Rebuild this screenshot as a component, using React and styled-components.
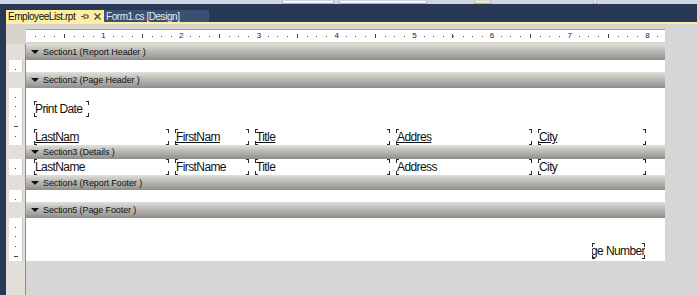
import styled, { createGlobalStyle } from 'styled-components';

const GlobalStyle = createGlobalStyle`
  html, body { margin: 0; padding: 0; }
  body { background: #293955; font-family: "Liberation Sans", Arial, sans-serif; }
`

const INCH = 77.72;
const EIGHTH = INCH / 8;

const Frame = styled.div`
  width: 697px;
  height: 295px;
  overflow: hidden;
  background: #293955;
  display: flex;
  flex-direction: column;
`

const TopStrip = styled.div`
  height: 4px;
  background: #cfd6e5;
  display: flex;
  align-items: flex-end;
`

const StripBox = styled.div`
  height: 3px;
  width: ${p => p.$w}px;
  margin-left: ${p => p.$ml}px;
  background: ${p => p.$bg || '#f4f6fa'};
  border: 1px solid #a9b4c8;
  border-top: none;
  box-sizing: border-box;
`

const TabRow = styled.div`
  height: 12px;
  margin-top: 6px;
  padding-left: 6px;
  display: flex;
`

const Tab = styled.div`
  height: 12px;
  width: ${p => p.$w}px;
  box-sizing: border-box;
  padding-left: 2px;
  display: flex;
  align-items: center;
  gap: 4px;
  background: ${p => (p.$active ? '#fdeea2' : '#3a5174')};
  color: ${p => (p.$active ? '#111' : '#e4e9f1')};
  font-size: 10px;
  letter-spacing: -0.45px;
  white-space: nowrap;
`

const TabLabel = styled.span`
  flex: 1;
`

const TabIcons = styled.span`
  display: flex;
  align-items: center;
  gap: 4px;
  margin-right: 3px;
`

const Document = styled.div`
  flex: 1;
  margin-left: 6px;
  border-top: 2px solid #fdeea2;
  background: #d6d6d6;
  display: flex;
  flex-direction: column;
`

const Row = styled.div`
  display: flex;
  height: ${p => p.$h}px;
  flex-shrink: 0;
`

const Gutter = styled.div`
  width: 20px;
  flex-shrink: 0;
  box-sizing: border-box;
  background: #e1dfd8;
  border-right: 1px solid #8c8c8c;
  display: flex;
`

const VRuler = styled.div`
  width: 13px;
  margin-left: 3px;
  background:
    linear-gradient(#444, #444) center ${INCH / 2 - 1}px / 4px 1px no-repeat,
    repeating-linear-gradient(to bottom, transparent 0, transparent ${EIGHTH - 1}px, #444 ${EIGHTH - 1}px, #444 ${EIGHTH}px) center top / 1px 100% no-repeat,
    #fff;
  border-right: 1px solid #c8c6c0;
`

const RulerArea = styled.div`
  width: 639px;
  background: #d7d4cc;
  padding-top: 5px;
  box-sizing: border-box;
`

const RulerTrack = styled.div`
  height: 13px;
  background: #fff;
  border-top: 1px solid #9c9c9c;
  box-sizing: border-box;
  display: flex;
  overflow: hidden;
`

const InchCell = styled.div`
  flex: 0 0 ${INCH}px;
  display: flex;
  align-items: center;
  justify-content: flex-end;
  background:
    linear-gradient(#444, #444) ${INCH / 2 - 1}px center / 1px 4px no-repeat,
    repeating-linear-gradient(to right, transparent 0, transparent ${EIGHTH - 1}px, #555 ${EIGHTH - 1}px, #555 ${EIGHTH}px) left center / 100% 1px no-repeat;
`

const InchNum = styled.span`
  font-size: 8px;
  line-height: 1;
  color: #222;
  background: #fff;
  padding: 0 1px;
  margin-right: -3px;
  position: relative;
  z-index: 1;
`

const RightFill = styled.div`
  flex: 1;
  background: #d6d6d6;
`

const Band = styled.div`
  width: 639px;
  box-sizing: border-box;
  padding-left: 5px;
  display: flex;
  align-items: center;
  gap: 4px;
  background: linear-gradient(to bottom, #e2e0da 0%, #c2c0ba 35%, #a4a3a0 75%, #8c8c8a 100%);
  font-size: 9px;
  letter-spacing: -0.1px;
  color: #111;
  white-space: nowrap;
`

const Triangle = styled.span`
  width: 0;
  height: 0;
  border-left: 4px solid transparent;
  border-right: 4px solid transparent;
  border-top: 4px solid #111;
`

const Body = styled.div`
  width: 639px;
  box-sizing: border-box;
  background: #fff;
  padding: ${p => p.$pad || '0 0 0 8px'};
  display: flex;
  flex-direction: column;
  justify-content: ${p => p.$justify || 'flex-start'};
  align-items: ${p => p.$align || 'stretch'};
`

const FieldRow = styled.div`
  display: grid;
  grid-template-columns: 135px 74px 135px 136px 108px;
  column-gap: 6px;
`

const mark = '#2a2a2a';

const Field = styled.div`
  height: 16px;
  width: ${p => (p.$w ? `${p.$w}px` : 'auto')};
  box-sizing: border-box;
  padding-left: 1px;
  display: flex;
  align-items: center;
  justify-content: ${p => (p.$right ? 'flex-end' : 'flex-start')};
  overflow: hidden;
  white-space: nowrap;
  font-size: 12px;
  letter-spacing: -0.6px;
  color: #111;
  text-decoration: ${p => (p.$underline ? 'underline' : 'none')};
  text-underline-offset: 1px;
  background:
    linear-gradient(${mark}, ${mark}) left top / 1px 4px no-repeat,
    linear-gradient(${mark}, ${mark}) left top / 3px 1px no-repeat,
    linear-gradient(${mark}, ${mark}) right top / 1px 4px no-repeat,
    linear-gradient(${mark}, ${mark}) right top / 3px 1px no-repeat,
    linear-gradient(${mark}, ${mark}) left bottom / 1px 4px no-repeat,
    linear-gradient(${mark}, ${mark}) left bottom / 3px 1px no-repeat,
    linear-gradient(${mark}, ${mark}) right bottom / 1px 4px no-repeat,
    linear-gradient(${mark}, ${mark}) right bottom / 3px 1px no-repeat;
`

const Bottom = styled.div`
  flex: 1;
  display: flex;
`

const BottomGutter = styled(Gutter)`
  border-right: 1px solid #8c8c8c;
`

const PinIcon = () => (
  <svg width="9" height="7" viewBox="0 0 9 7">
    <path d="M0 3.5h3M3 1v5M3 2h4v3H3M7 2.5v2" stroke="#555" strokeWidth="1" fill="none" />
  </svg>
);

const CloseIcon = () => (
  <svg width="7" height="7" viewBox="0 0 7 7">
    <path d="M0.5 0.5l6 6M6.5 0.5l-6 6" stroke="#444" strokeWidth="1.3" />
  </svg>
);

const sections = [
  { name: 'Section1 (Report Header )', band: 16, body: 12 },
  { name: 'Section2 (Page Header )', band: 16, body: 57, kind: 'page' },
  { name: 'Section3 (Details )', band: 14, body: 16, kind: 'details' },
  { name: 'Section4 (Report Footer )', band: 15, body: 12 },
  { name: 'Section5 (Page Footer )', band: 16, body: 43, kind: 'footer' },
];

const headerCols = ['LastNam', 'FirstNam', 'Title', 'Addres', 'City'];
const detailCols = ['LastName', 'FirstName', 'Title', 'Address', 'City'];

const SectionBody = ({ kind }) => {
  if (kind === 'page') {
    return (
      <Body $justify="space-between" $pad="13px 0 0 8px">
        <Field $w={55}>Print Date</Field>
        <FieldRow>
          {headerCols.map(c => <Field key={c} $underline>{c}</Field>)}
        </FieldRow>
      </Body>
    );
  }
  if (kind === 'details') {
    return (
      <Body>
        <FieldRow>
          {detailCols.map(c => <Field key={c}>{c}</Field>)}
        </FieldRow>
      </Body>
    );
  }
  if (kind === 'footer') {
    return (
      <Body $justify="flex-end" $align="flex-end" $pad="0 20px 2px 0">
        <Field $w={53} $right>Page Number</Field>
      </Body>
    );
  }
  return <Body />;
};

export default function App() {
  return (
    <Frame>
      <GlobalStyle />
      <TopStrip>
        <StripBox $ml={282} $w={52} />
        <StripBox $ml={5} $w={88} />
        <StripBox $ml={47} $w={17} $bg="#fde9a8" />
        <StripBox $ml={102} $w={4} />
      </TopStrip>
      <TabRow>
        <Tab $active $w={98}>
          <TabLabel>EmployeeList.rpt</TabLabel>
          <TabIcons><PinIcon /><CloseIcon /></TabIcons>
        </Tab>
        <Tab $w={105}>
          <TabLabel>Form1.cs [Design]</TabLabel>
        </Tab>
      </TabRow>
      <Document>
        <Row $h={20}>
          <Gutter style={{ background: '#d7d4cc', borderRight: 'none' }} />
          <RulerArea>
            <RulerTrack>
              {[1, 2, 3, 4, 5, 6, 7, 8, 9].map(n => (
                <InchCell key={n}>{n < 9 && <InchNum>{n}</InchNum>}</InchCell>
              ))}
            </RulerTrack>
          </RulerArea>
          <RightFill />
        </Row>
        {sections.map(s => (
          <div key={s.name}>
            <Row $h={s.band}>
              <Gutter />
              <Band><Triangle />{s.name}</Band>
              <RightFill />
            </Row>
            <Row $h={s.body}>
              <Gutter><VRuler /></Gutter>
              <SectionBody kind={s.kind} />
              <RightFill />
            </Row>
          </div>
        ))}
        <Bottom>
          <BottomGutter />
          <RightFill />
        </Bottom>
      </Document>
    </Frame>
  );
}
